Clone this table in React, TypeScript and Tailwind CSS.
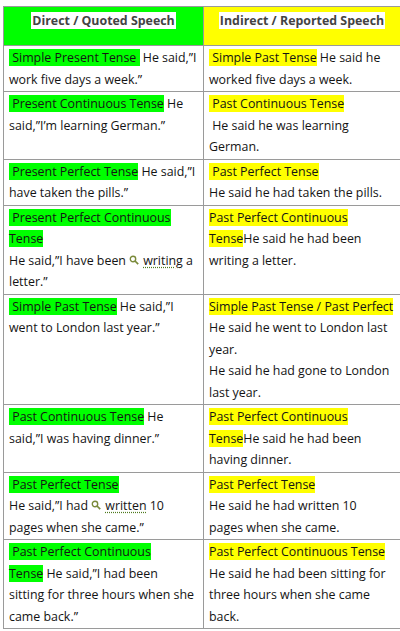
import React from "react";

const G = ({ children }: { children: React.ReactNode }) => (
  <span className="bg-[#00ff00]">{children}</span>
);
const Y = ({ children }: { children: React.ReactNode }) => (
  <span className="bg-[#ffff00]">{children}</span>
);

const Lookup = ({ word }: { word: string }) => (
  <>
    <svg width="10" height="10" viewBox="0 0 10 10" className="inline-block mr-[4px] align-[0px]">
      <circle cx="4" cy="4" r="2.7" fill="none" stroke="#7a8a3a" strokeWidth="1.4" />
      <line x1="6" y1="6" x2="9.2" y2="9.2" stroke="#7a8a3a" strokeWidth="1.7" />
    </svg>
    <span className="underline decoration-dotted decoration-[#4f7a1f] underline-offset-2">{word}</span>
  </>
);

const rows: { left: React.ReactNode; right: React.ReactNode }[] = [
  {
    left: (
      <>
        <G>&nbsp;Simple Present Tense&nbsp;</G> He said,”I work five days a week.”
      </>
    ),
    right: (
      <>
        <Y>&nbsp;Simple Past Tense</Y> He said he worked five days a week.
      </>
    ),
  },
  {
    left: (
      <>
        <G>&nbsp;Present Continuous Tense</G> He said,”I’m learning German.”
      </>
    ),
    right: (
      <>
        <Y>&nbsp;Past Continuous Tense</Y>
        <br />
        &nbsp;He said he was learning German.
      </>
    ),
  },
  {
    left: (
      <>
        <G>&nbsp;Present Perfect Tense</G> He said,”I have taken the pills.”
      </>
    ),
    right: (
      <>
        <Y>&nbsp;Past Perfect Tense</Y>
        <br />
        He said he had taken the pills.
      </>
    ),
  },
  {
    left: (
      <>
        <G>&nbsp;Present Perfect Continuous Tense</G>
        <br />
        He said,”I have been <Lookup word="writing" /> a letter.”
      </>
    ),
    right: (
      <>
        <Y>Past Perfect Continuous Tense</Y>He said he had been writing a letter.
      </>
    ),
  },
  {
    left: (
      <>
        <G>&nbsp;Simple Past Tense</G> He said,”I went to London last year.”
      </>
    ),
    right: (
      <>
        <Y>Simple Past Tense / Past Perfect</Y>
        <br />
        He said he went to London last year.
        <br />
        He said he had gone to London last year.
      </>
    ),
  },
  {
    left: (
      <>
        <G>&nbsp;Past Continuous Tense</G> He said,”I was having dinner.”
      </>
    ),
    right: (
      <>
        <Y>Past Perfect Continuous Tense</Y>He said he had been having dinner.
      </>
    ),
  },
  {
    left: (
      <>
        <G>&nbsp;Past Perfect Tense</G>
        <br />
        He said,”I had <Lookup word="written" /> 10 pages when she came.”
      </>
    ),
    right: (
      <>
        <Y>Past Perfect Tense</Y>
        <br />
        He said he had written 10
        <br />
        pages when she came.
      </>
    ),
  },
  {
    left: (
      <>
        <G>
          &nbsp;Past Perfect Continuous
          <br />
          Tense
        </G>{" "}
        He said,”I had been
        <br />
        <span className="whitespace-nowrap">sitting for three hours when she</span>
        <br />
        came back.”
      </>
    ),
    right: (
      <>
        <Y>Past Perfect Continuous Tense</Y>
        <br />
        He said he had been sitting for three hours when she came back.
      </>
    ),
  },
];

export default function App() {
  return (
    <div className="bg-white w-[400px] h-[631px] overflow-hidden pt-[6px] pl-[3px] font-['Open_Sans',sans-serif] text-[12.4px] leading-[21.5px] text-[#141414]">
      <table className="border-collapse w-[397px] table-fixed">
        <colgroup>
          <col className="w-[200px]" />
          <col className="w-[197px]" />
        </colgroup>
        <thead>
          <tr className="h-[39px]">
            <th className="border border-[#9a9a9a] bg-[#00ff00] align-top pt-[3px] font-bold text-[#444]">
              <span className="bg-white px-[1px]">Direct / Quoted Speech</span>
            </th>
            <th className="border border-[#9a9a9a] bg-[#ffff00] align-top pt-[3px] font-bold text-[#444]">
              <span className="bg-white px-[1px]">Indirect / Reported Speech</span>
            </th>
          </tr>
        </thead>
        <tbody>
          {rows.map((r, i) => (
            <tr key={i}>
              <td className="border border-[#9a9a9a] align-top px-[5px] pt-[1px] pb-[1px]">{r.left}</td>
              <td className="border border-[#9a9a9a] align-top px-[5px] pt-[1px] pb-[1px]">{r.right}</td>
            </tr>
          ))}
        </tbody>
      </table>
    </div>
  );
}
